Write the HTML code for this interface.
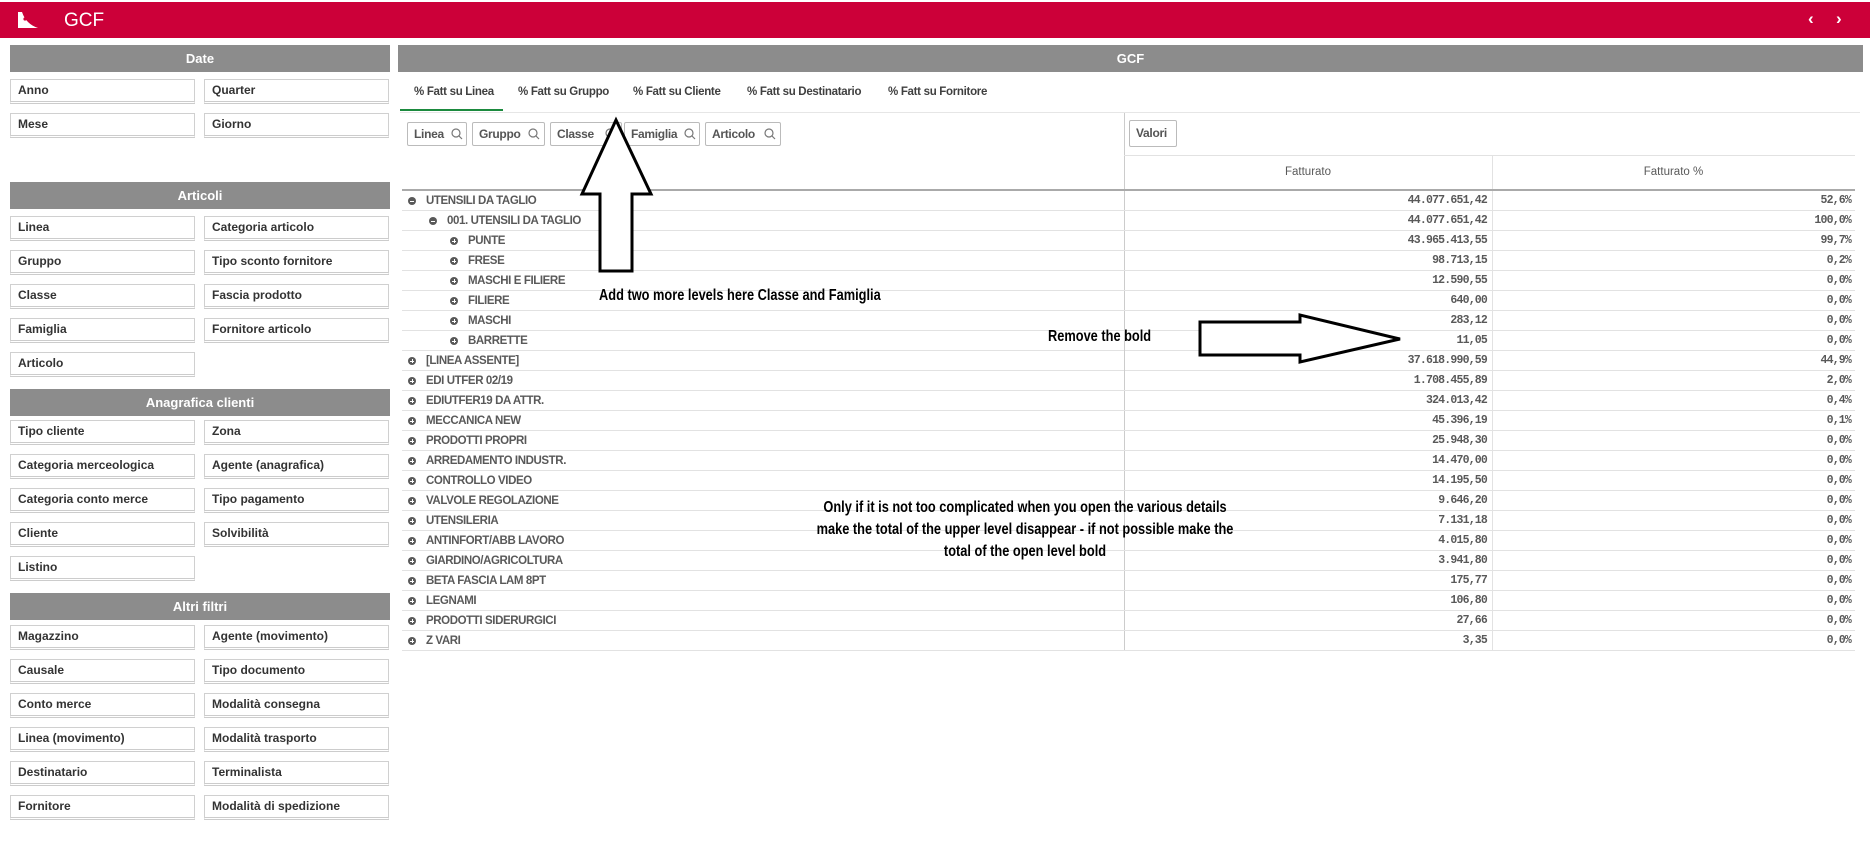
<!DOCTYPE html>
<html><head><meta charset="utf-8"><style>
*{box-sizing:border-box;margin:0;padding:0}
body{width:1870px;height:846px;background:#fff;font-family:"Liberation Sans",sans-serif;position:relative;overflow:hidden;color:#404040}
.abs{position:absolute}
.top{left:0;top:2px;width:1870px;height:36px;background:#cc0039}
.hdr{background:#8c8c8c;color:#fff;font-weight:bold;font-size:13px;text-align:center;line-height:27px;height:27px}
.fb{position:absolute;width:185px;height:25px;border:1px solid #d0d0d0;border-bottom:3px double #ccc;font-size:12px;font-weight:bold;padding-left:7px;line-height:20px;color:#333}
.tab{position:absolute;top:86px;font-size:11.5px;font-weight:bold;color:#404040;letter-spacing:-0.3px}
.dim{position:absolute;top:122px;height:24px;border:1px solid #bbb;border-radius:2px;font-size:12px;font-weight:bold;line-height:22px;padding-left:6px;color:#555;letter-spacing:-0.3px}
.row{position:absolute;left:402px;width:1453px;height:20px;border-bottom:1px solid #e2e2e2;font-size:11.5px;font-weight:bold;color:#595959;line-height:20px}
.row .t{position:absolute;letter-spacing:-0.4px}
.row .ic{position:absolute;top:6px;width:8px;height:8px;border-radius:50%;background:#595959}
.row .ic:after{content:"";position:absolute;left:2px;top:3.5px;width:4px;height:1px;background:#fff}
.row .p:before{content:"";position:absolute;left:3.5px;top:2px;width:1px;height:4px;background:#fff}
.row .v1{position:absolute;right:368px;font-family:"Liberation Mono",monospace;font-size:11.5px;letter-spacing:-0.8px}
.row .v2{position:absolute;right:4px;font-family:"Liberation Mono",monospace;font-size:11.5px;letter-spacing:-0.8px}
.ann{position:absolute;font-size:16px;color:#000;white-space:nowrap;transform-origin:left top;font-weight:bold}
</style></head><body>
<div class="abs top"></div>
<svg class="abs" style="left:16px;top:10px" width="24" height="20"><path d="M2 2 L2 18 L22 18 Q10 14 6 2 Z" fill="#fff"/><circle cx="9" cy="9" r="1.6" fill="#cc0039"/></svg>
<div class="abs" style="left:64px;top:10px;color:#fff;font-size:19px">GCF</div>
<div class="abs" style="left:1808px;top:9px;color:#fff;font-size:17px;font-weight:bold">&#8249;</div>
<div class="abs" style="left:1836px;top:9px;color:#fff;font-size:17px;font-weight:bold">&#8250;</div>

<div class="abs hdr" style="left:10px;top:45px;width:380px">Date</div>
<div class="fb" style="left:10px;top:79px">Anno</div><div class="fb" style="left:204px;top:79px">Quarter</div>
<div class="fb" style="left:10px;top:113px">Mese</div><div class="fb" style="left:204px;top:113px">Giorno</div>
<div class="abs hdr" style="left:10px;top:182px;width:380px">Articoli</div>
<div class="fb" style="left:10px;top:216px">Linea</div><div class="fb" style="left:204px;top:216px">Categoria articolo</div>
<div class="fb" style="left:10px;top:250px">Gruppo</div><div class="fb" style="left:204px;top:250px">Tipo sconto fornitore</div>
<div class="fb" style="left:10px;top:284px">Classe</div><div class="fb" style="left:204px;top:284px">Fascia prodotto</div>
<div class="fb" style="left:10px;top:318px">Famiglia</div><div class="fb" style="left:204px;top:318px">Fornitore articolo</div>
<div class="fb" style="left:10px;top:352px">Articolo</div>
<div class="abs hdr" style="left:10px;top:389px;width:380px">Anagrafica clienti</div>
<div class="fb" style="left:10px;top:420px">Tipo cliente</div><div class="fb" style="left:204px;top:420px">Zona</div>
<div class="fb" style="left:10px;top:454px">Categoria merceologica</div><div class="fb" style="left:204px;top:454px">Agente (anagrafica)</div>
<div class="fb" style="left:10px;top:488px">Categoria conto merce</div><div class="fb" style="left:204px;top:488px">Tipo pagamento</div>
<div class="fb" style="left:10px;top:522px">Cliente</div><div class="fb" style="left:204px;top:522px">Solvibilità</div>
<div class="fb" style="left:10px;top:556px">Listino</div>
<div class="abs hdr" style="left:10px;top:593px;width:380px">Altri filtri</div>
<div class="fb" style="left:10px;top:625px">Magazzino</div><div class="fb" style="left:204px;top:625px">Agente (movimento)</div>
<div class="fb" style="left:10px;top:659px">Causale</div><div class="fb" style="left:204px;top:659px">Tipo documento</div>
<div class="fb" style="left:10px;top:693px">Conto merce</div><div class="fb" style="left:204px;top:693px">Modalità consegna</div>
<div class="fb" style="left:10px;top:727px">Linea (movimento)</div><div class="fb" style="left:204px;top:727px">Modalità trasporto</div>
<div class="fb" style="left:10px;top:761px">Destinatario</div><div class="fb" style="left:204px;top:761px">Terminalista</div>
<div class="fb" style="left:10px;top:795px">Fornitore</div><div class="fb" style="left:204px;top:795px">Modalità di spedizione</div>

<div class="abs hdr" style="left:398px;top:45px;width:1465px">GCF</div>
<div class="tab" style="left:414px">% Fatt su Linea</div>
<div class="tab" style="left:518px">% Fatt su Gruppo</div>
<div class="tab" style="left:633px">% Fatt su Cliente</div>
<div class="tab" style="left:747px">% Fatt su Destinatario</div>
<div class="tab" style="left:888px">% Fatt su Fornitore</div>
<div class="abs" style="left:400px;top:109px;width:103px;height:2px;background:#1b8a3e"></div>
<div class="abs" style="left:400px;top:112px;width:1460px;height:1px;background:#e6e6e6"></div>

<div class="dim" style="left:407px;width:60px">Linea</div>
<div class="dim" style="left:472px;width:73px">Gruppo</div>
<div class="dim" style="left:550px;width:72px">Classe</div>
<div class="dim" style="left:624px;width:76px">Famiglia</div>
<div class="dim" style="left:705px;width:76px">Articolo</div>
<div class="dim" style="left:1129px;width:48px;top:120px;height:27px;line-height:25px">Valori</div>
<div class="abs" style="left:1124px;top:113px;width:1px;height:538px;background:#ccc"></div>
<div class="abs" style="left:1492px;top:155px;width:1px;height:496px;background:#e2e2e2"></div>
<div class="abs" style="left:1124px;top:155px;width:731px;height:1px;background:#e2e2e2"></div>
<div class="abs" style="left:1124px;top:166px;width:368px;text-align:center;font-size:11.5px;color:#595959">Fatturato</div>
<div class="abs" style="left:1492px;top:166px;width:363px;text-align:center;font-size:11.5px;color:#595959">Fatturato %</div>
<div class="abs" style="left:402px;top:189px;width:1453px;height:2px;background:#aaa"></div>

<div id="rows"></div>
<script>
var d=[[0,'m','UTENSILI DA TAGLIO','44.077.651,42','52,6%'],[1,'m','001. UTENSILI DA TAGLIO','44.077.651,42','100,0%'],[2,'p','PUNTE','43.965.413,55','99,7%'],[2,'p','FRESE','98.713,15','0,2%'],[2,'p','MASCHI E FILIERE','12.590,55','0,0%'],[2,'p','FILIERE','640,00','0,0%'],[2,'p','MASCHI','283,12','0,0%'],[2,'p','BARRETTE','11,05','0,0%'],[0,'p','[LINEA ASSENTE]','37.618.990,59','44,9%'],[0,'p','EDI UTFER 02/19','1.708.455,89','2,0%'],[0,'p','EDIUTFER19 DA ATTR.','324.013,42','0,4%'],[0,'p','MECCANICA NEW','45.396,19','0,1%'],[0,'p','PRODOTTI PROPRI','25.948,30','0,0%'],[0,'p','ARREDAMENTO INDUSTR.','14.470,00','0,0%'],[0,'p','CONTROLLO VIDEO','14.195,50','0,0%'],[0,'p','VALVOLE REGOLAZIONE','9.646,20','0,0%'],[0,'p','UTENSILERIA','7.131,18','0,0%'],[0,'p','ANTINFORT/ABB LAVORO','4.015,80','0,0%'],[0,'p','GIARDINO/AGRICOLTURA','3.941,80','0,0%'],[0,'p','BETA FASCIA LAM 8PT','175,77','0,0%'],[0,'p','LEGNAMI','106,80','0,0%'],[0,'p','PRODOTTI SIDERURGICI','27,66','0,0%'],[0,'p','Z VARI','3,35','0,0%']];
var h='';d.forEach(function(r,i){var x=6+r[0]*21;h+='<div class="row" style="top:'+(191+20*i)+'px"><span class="ic '+r[1]+'" style="left:'+x+'px"></span><span class="t" style="left:'+(x+18)+'px">'+r[2]+'</span><span class="v1">'+r[3]+'</span><span class="v2">'+r[4]+'</span></div>';});
document.getElementById('rows').innerHTML=h;
</script>

<svg class="abs" style="left:0;top:0" width="1870" height="846">
<g fill="none" stroke="#777" stroke-width="1.2">
<circle cx="456" cy="133" r="4"/><line x1="459" y1="136" x2="462" y2="139"/>
<circle cx="533" cy="133" r="4"/><line x1="536" y1="136" x2="539" y2="139"/>
<circle cx="610" cy="133" r="4"/><line x1="613" y1="136" x2="616" y2="139"/>
<circle cx="689" cy="133" r="4"/><line x1="692" y1="136" x2="695" y2="139"/>
<circle cx="769" cy="133" r="4"/><line x1="772" y1="136" x2="775" y2="139"/>
</g>
<path d="M616 120 L651 194 L632 194 L632 271 L600 271 L600 194 L582 194 Z" fill="#fff" stroke="#000" stroke-width="3" stroke-linejoin="miter"/>
<path d="M1200 322 L1300 322 L1300 315 L1400 339 L1300 362 L1300 355 L1200 355 Z" fill="#fff" stroke="#000" stroke-width="3"/>
</svg>
<div class="abs" style="left:1124px;top:313px;width:1px;height:60px;background:#ccc"></div>
<div class="ann" style="left:599px;top:287px;transform:scaleX(0.8)">Add two more levels here Classe and Famiglia</div>
<div class="ann" style="left:1048px;top:328px;transform:scaleX(0.8)">Remove the bold</div>
<div class="ann" style="left:690px;top:497px;width:670px;text-align:center;line-height:22px;white-space:normal;transform:scaleX(0.8);transform-origin:center top">Only if it is not too complicated when you open the various details<br>make the total of the upper level disappear - if not possible make the<br>total of the open level bold</div>
</body></html>
